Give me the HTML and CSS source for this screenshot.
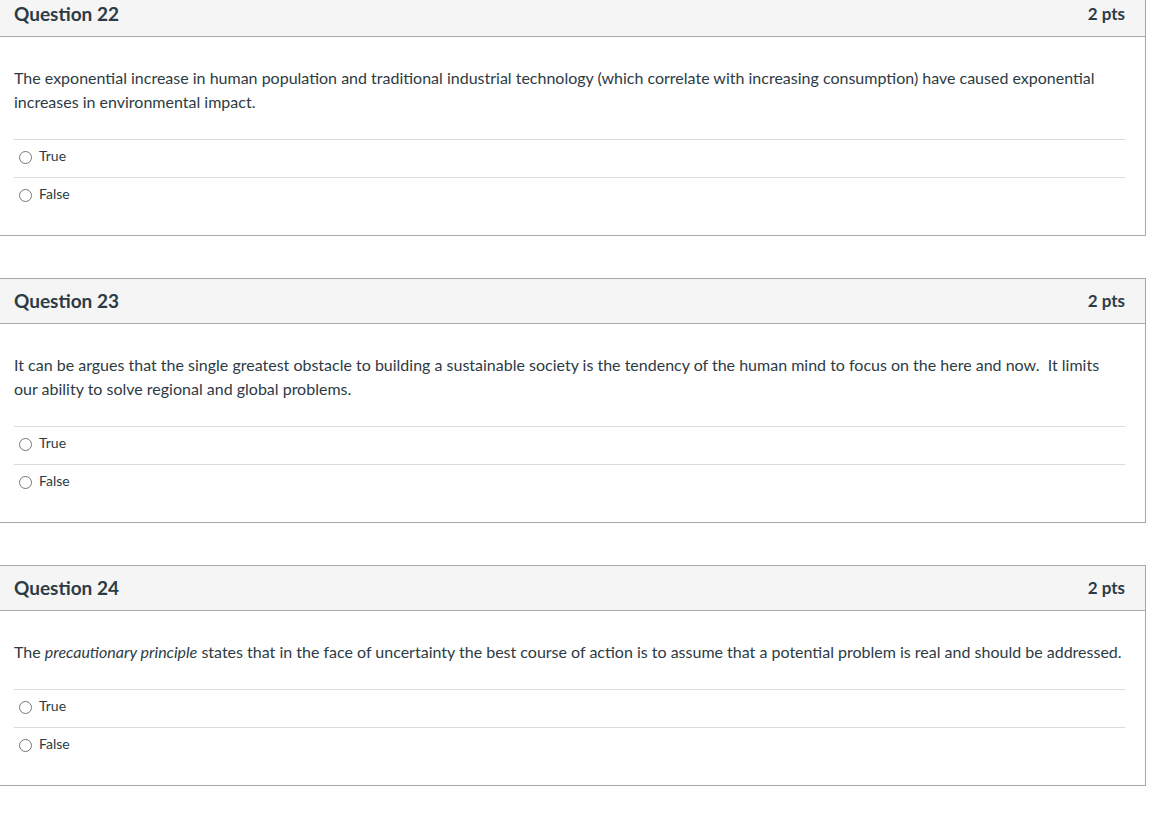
FILE: index.html
```html
<!DOCTYPE html>
<html lang="en">
<head>
<meta charset="utf-8">
<title>Quiz</title>
<link rel="stylesheet" href="styles.css">
</head>
<body>
<div class="quiz">
  <section class="question">
    <header class="q-header">
      <h2 class="q-title">Question 22</h2>
      <span class="q-pts">2 pts</span>
    </header>
    <div class="q-body">
      <p class="q-text">The exponential increase in human population and traditional industrial technology (which correlate with increasing consumption) have caused exponential increases in environmental impact.</p>
      <div class="answers">
        <label class="answer"><span class="radio"></span><span class="a-label">True</span></label>
        <label class="answer"><span class="radio"></span><span class="a-label">False</span></label>
      </div>
    </div>
  </section>

  <section class="question">
    <header class="q-header">
      <h2 class="q-title">Question 23</h2>
      <span class="q-pts">2 pts</span>
    </header>
    <div class="q-body">
      <p class="q-text">It can be argues that the single greatest obstacle to building a sustainable society is the tendency of the human mind to focus on the here and now.&nbsp; It limits our ability to solve regional and global problems.</p>
      <div class="answers">
        <label class="answer"><span class="radio"></span><span class="a-label">True</span></label>
        <label class="answer"><span class="radio"></span><span class="a-label">False</span></label>
      </div>
    </div>
  </section>

  <section class="question">
    <header class="q-header">
      <h2 class="q-title">Question 24</h2>
      <span class="q-pts">2 pts</span>
    </header>
    <div class="q-body">
      <p class="q-text">The <em>precautionary principle</em> states that in the face of uncertainty the best course of action is to assume that a potential problem is real and should be addressed.</p>
      <div class="answers">
        <label class="answer"><span class="radio"></span><span class="a-label">True</span></label>
        <label class="answer"><span class="radio"></span><span class="a-label">False</span></label>
      </div>
    </div>
  </section>
</div>
</body>
</html>
```

FILE: styles.css
```css
html, body {
  margin: 0;
  padding: 0;
  background: #ffffff;
}

body {
  font-family: Lato, "Open Sans", "Liberation Sans", sans-serif;
  color: #2d3b45;
}

.quiz {
  width: 1146px;
  margin-top: -9px;
  display: flex;
  flex-direction: column;
  gap: 42px;
}

.question {
  border: 1px solid #a8a8a8;
  border-left: 0;
  background: #fff;
}

.q-header {
  height: 44px;
  background: #f5f5f5;
  border-bottom: 1px solid #a8a8a8;
  display: flex;
  align-items: center;
  justify-content: space-between;
  padding: 0 20px 0 14px;
}

.q-title {
  margin: 0;
  font-size: 19px;
  font-weight: 700;
  color: #2d3b45;
  line-height: 24px;
}

.q-pts {
  font-size: 17px;
  font-weight: 700;
  color: #2d3b45;
  line-height: 24px;
}

.q-body {
  padding: 29px 20px 20px 14px;
}

.q-text {
  margin: 0 0 25px 0;
  font-size: 16px;
  line-height: 24px;
}

.q-text em {
  font-style: italic;
}

.answers {
  display: flex;
  flex-direction: column;
}

.answer {
  display: flex;
  align-items: center;
  height: 37px;
  border-top: 1px solid #dcdcdc;
  padding-left: 5px;
  gap: 7px;
  font-size: 14px;
}

.radio {
  width: 11px;
  height: 11px;
  border: 1px solid #777;
  border-radius: 50%;
  flex: none;
  margin-top: -3px;
}

.a-label {
  line-height: 16px;
  margin-top: -5px;
}
```
